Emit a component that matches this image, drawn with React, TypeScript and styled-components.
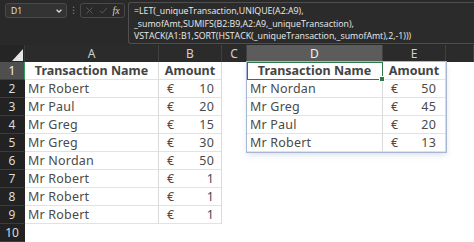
import React from 'react';
import styled, { createGlobalStyle } from 'styled-components';

const GlobalStyle = createGlobalStyle`
  html, body {
    margin: 0;
    padding: 0;
    background: #ffffff;
    overflow: hidden;
  }
`;

const columns = ['A', 'B', 'C', 'D', 'E', ''];

const source = [
  { name: 'Mr Robert', amount: 10 },
  { name: 'Mr Paul', amount: 20 },
  { name: 'Mr Greg', amount: 15 },
  { name: 'Mr Greg', amount: 30 },
  { name: 'Mr Nordan', amount: 50 },
  { name: 'Mr Robert', amount: 1 },
  { name: 'Mr Robert', amount: 1 },
  { name: 'Mr Robert', amount: 1 },
];

const spilled = [
  { name: 'Mr Nordan', amount: 50 },
  { name: 'Mr Greg', amount: 45 },
  { name: 'Mr Paul', amount: 20 },
  { name: 'Mr Robert', amount: 13 },
];

const formula = [
  '=LET(_uniqueTransaction,UNIQUE(A2:A9),',
  '_sumofAmt,SUMIFS(B2:B9,A2:A9,_uniqueTransaction),',
  'VSTACK(A1:B1,SORT(HSTACK(_uniqueTransaction,_sumofAmt),2,-1)))',
];

const App: React.FC = () => {
  return (
    <Page>
      <GlobalStyle />
      <FormulaBar>
        <NameBox>
          <span>D1</span>
          <Chevron viewBox="0 0 10 10">
            <path d="M2 3.5 L5 6.5 L8 3.5" />
          </Chevron>
        </NameBox>
        <Dots>⋮</Dots>
        <FxBox>
          <FxIcon viewBox="0 0 12 12">
            <path d="M2 2 L10 10 M10 2 L2 10" />
          </FxIcon>
          <FxIcon viewBox="0 0 12 12">
            <path d="M1.5 6.5 L4.5 9.5 L10.5 2.5" />
          </FxIcon>
          <FxLabel>fx</FxLabel>
        </FxBox>
        <FormulaBox>
          {formula.map((line, i) => (
            <div key={i}>{line}</div>
          ))}
        </FormulaBox>
      </FormulaBar>

      <Sheet>
        <Corner>
          <svg width="11" height="12" viewBox="0 0 11 12">
            <polygon points="11,0 11,12 0,12" fill="#e6e6e6" />
          </svg>
        </Corner>
        {columns.map((c, i) => (
          <ColHeader key={i} active={c === 'D'}>
            {c}
          </ColHeader>
        ))}

        {Array.from({ length: 10 }, (_, r) => {
          const row = r + 1;
          const src = row === 1 ? null : source[row - 2];
          return (
            <React.Fragment key={row}>
              <RowHeader active={row === 1} style={{ gridRow: row + 1 }}>
                {row}
              </RowHeader>
              {row === 1 ? (
                <>
                  <HeadCell style={{ gridRow: 2, gridColumn: 2 }}>Transaction Name</HeadCell>
                  <HeadCell style={{ gridRow: 2, gridColumn: 3 }}>Amount</HeadCell>
                </>
              ) : src ? (
                <>
                  <TextCell style={{ gridRow: row + 1, gridColumn: 2 }}>{src.name}</TextCell>
                  <MoneyCell style={{ gridRow: row + 1, gridColumn: 3 }}>
                    <span>€</span>
                    <span>{src.amount}</span>
                  </MoneyCell>
                </>
              ) : (
                <>
                  <Blank style={{ gridRow: row + 1, gridColumn: 2 }} />
                  <Blank style={{ gridRow: row + 1, gridColumn: 3 }} />
                </>
              )}
              <Blank style={{ gridRow: row + 1, gridColumn: 4 }} />
              {row > 5 && (
                <>
                  <Blank style={{ gridRow: row + 1, gridColumn: 5 }} />
                  <Blank style={{ gridRow: row + 1, gridColumn: 6 }} />
                </>
              )}
              <Blank style={{ gridRow: row + 1, gridColumn: 7 }} />
            </React.Fragment>
          );
        })}

        <Spill>
          <ActiveCell>
            Transaction Name
            <FillHandle />
          </ActiveCell>
          <HeadCell>Amount</HeadCell>
          {spilled.map((s, i) => (
            <React.Fragment key={i}>
              <TextCell>{s.name}</TextCell>
              <MoneyCell wide>
                <span>€</span>
                <span>{s.amount}</span>
              </MoneyCell>
            </React.Fragment>
          ))}
        </Spill>
      </Sheet>
    </Page>
  );
};

export default App;

const Page = styled.div`
  width: 474px;
  height: 242px;
  overflow: hidden;
  background: #ffffff;
`;

const FormulaBar = styled.div`
  height: 45px;
  background: #292929;
  display: flex;
  align-items: flex-start;
  padding: 3px 0 0 5px;
  box-sizing: border-box;
`;

const NameBox = styled.div`
  width: 62px;
  height: 15px;
  box-sizing: border-box;
  background: #333333;
  border: 1px solid #4a4a4a;
  border-radius: 3px;
  display: flex;
  align-items: center;
  justify-content: space-between;
  padding: 0 3px 0 5px;
  color: #e6e6e6;
  font-family: 'Open Sans', sans-serif;
  font-size: 8.5px;
`;

const Chevron = styled.svg`
  width: 8px;
  height: 8px;
  fill: none;
  stroke: #e0e0e0;
  stroke-width: 1.6;
`;

const Dots = styled.div`
  width: 13px;
  text-align: center;
  color: #8a8a8a;
  font-family: 'DejaVu Sans', sans-serif;
  font-size: 9px;
  line-height: 15px;
`;

const FxBox = styled.div`
  width: 45px;
  height: 15px;
  box-sizing: border-box;
  border: 1px solid #4a4a4a;
  border-radius: 3px;
  display: flex;
  align-items: center;
  justify-content: space-around;
  padding: 0 2px;
`;

const FxIcon = styled.svg`
  width: 9px;
  height: 9px;
  fill: none;
  stroke: #5e5e5e;
  stroke-width: 1.2;
`;

const FxLabel = styled.span`
  color: #d6d6d6;
  font-family: 'Liberation Serif', serif;
  font-style: italic;
  font-size: 10px;
  line-height: 10px;
`;

const FormulaBox = styled.div`
  margin-left: 3px;
  margin-top: -1px;
  flex: 1;
  height: 42px;
  box-sizing: border-box;
  background: #2b2b2b;
  border: 1px solid #4f4f4f;
  border-right: none;
  border-radius: 3px 0 0 3px;
  padding: 2px 0 0 5px;
  color: #ececec;
  font-family: 'Open Sans', sans-serif;
  font-size: 8.8px;
  line-height: 12.5px;
  white-space: nowrap;
`;

const Sheet = styled.div`
  display: grid;
  grid-template-columns: 25px 134px 63px 25px 136px 63px 1fr;
  grid-template-rows: 17px repeat(10, 18px);
  font-family: 'Noto Sans', 'Open Sans', sans-serif;
  font-size: 12.5px;
  color: #4a4a4a;
`;

const Corner = styled.div`
  background: #252525;
  border-right: 1px solid #3a3a3a;
  display: flex;
  align-items: flex-end;
  justify-content: flex-end;
  padding: 0 1px 1px 0;
  box-sizing: border-box;
`;

const ColHeader = styled.div<{ active?: boolean }>`
  background: ${({ active }) => (active ? '#5c5c5c' : '#2b2b2b')};
  border-right: 1px solid #414141;
  border-bottom: 1px solid ${({ active }) => (active ? '#6d8f79' : '#2b2b2b')};
  color: ${({ active }) => (active ? '#f2f2f2' : '#d0d0d0')};
  display: flex;
  align-items: center;
  justify-content: center;
  font-size: 12px;
  box-sizing: border-box;
`;

const RowHeader = styled.div<{ active?: boolean }>`
  grid-column: 1;
  background: ${({ active }) => (active ? '#4f4f4f' : '#222222')};
  border-bottom: 1px solid #3c3c3c;
  border-right: 1px solid ${({ active }) => (active ? '#2f9e5b' : '#222222')};
  color: ${({ active }) => (active ? '#f0f0f0' : '#dcdcdc')};
  display: flex;
  align-items: center;
  justify-content: center;
  font-size: 12px;
  box-sizing: border-box;
`;

const Blank = styled.div`
  background: #ffffff;
`;

const TextCell = styled.div`
  border-right: 1px solid #dadada;
  border-bottom: 1px solid #e2e2e2;
  display: flex;
  align-items: center;
  padding-left: 3px;
  box-sizing: border-box;
  white-space: nowrap;
  letter-spacing: 0.2px;
`;

const HeadCell = styled(TextCell)`
  justify-content: center;
  padding-left: 0;
  font-weight: 700;
  color: #444444;
  letter-spacing: 0;
`;

const MoneyCell = styled(TextCell)<{ wide?: boolean }>`
  justify-content: space-between;
  padding: 0 ${({ wide }) => (wide ? '9px' : '7px')} 0 8px;
`;

const Spill = styled.div`
  grid-column: 5 / 7;
  grid-row: 2 / 7;
  display: grid;
  grid-template-columns: 136px 63px;
  grid-template-rows: repeat(5, 18px);
  position: relative;
  outline: 1px solid #a7b7d3;
  box-shadow: 0 3px 6px rgba(120, 140, 170, 0.25);
  background: #ffffff;
`;

const ActiveCell = styled(HeadCell)`
  position: relative;
  outline: 1.5px solid #2a7a4a;
  outline-offset: -1px;
  z-index: 1;
`;

const FillHandle = styled.div`
  position: absolute;
  right: -3px;
  bottom: -3px;
  width: 4px;
  height: 4px;
  background: #2a7a4a;
  border: 1px solid #ffffff;
`;
